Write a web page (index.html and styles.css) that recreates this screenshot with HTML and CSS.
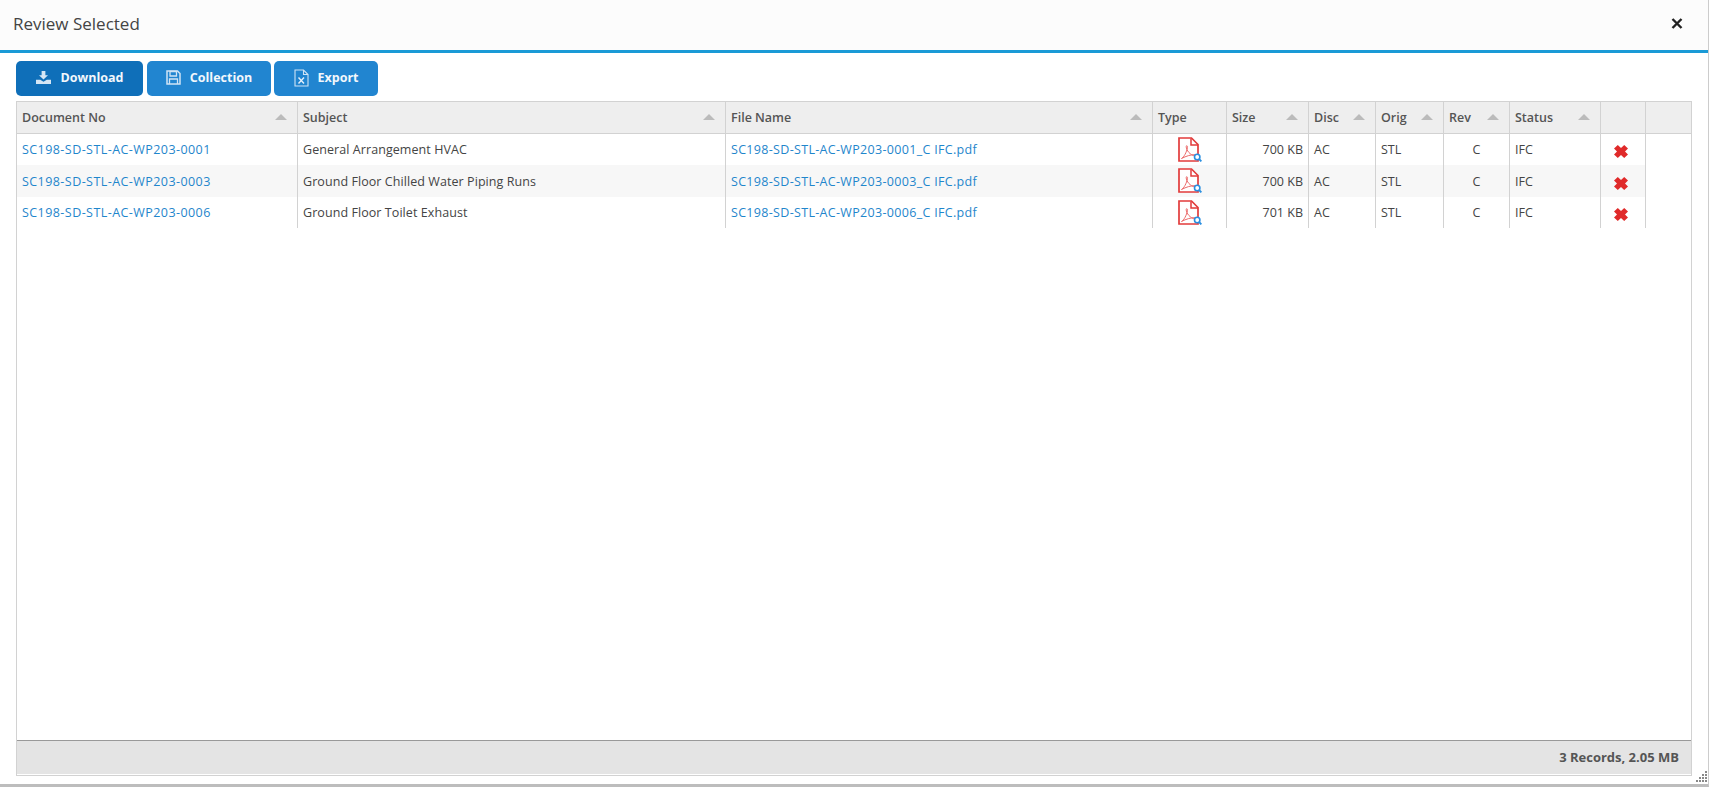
FILE: index.html
```html
<!DOCTYPE html>
<html lang="en">
<head>
  <meta charset="UTF-8">
  <meta name="viewport" content="width=device-width, initial-scale=1.0">
  <title>Review Selected</title>

  <link rel="stylesheet" href="styles.css">
</head>

<body>
  <svg class="sprites" aria-hidden="true">
    <symbol id="icon-pdf" viewBox="0 0 24 26">
      <path d="M1 1h12.500l6.500 6.500V24H1z" fill="#fff" stroke="#e23b3b" stroke-width="1.700"/>
      <path d="M13 1.500V8h7" fill="none" stroke="#e23b3b" stroke-width="1.500"/>
      <path d="M3.500 21.500c2.500-1.500 5-6 6-11 .3-2-1.300-2.500-1.300-.8 0 3.500 4 8.500 8.800 9.300 2 .3 2-1.300 .2-1.300-4-.2-9 1.300-13.700 3.800z" fill="none" stroke="#ec6a6a" stroke-width="1"/>
      <circle cx="19.200" cy="20" r="2.700" fill="#fff" stroke="#2a8fe0" stroke-width="1.600"/>
      <path d="M21 22l2.400 2.400" stroke="#2a8fe0" stroke-width="1.900"/>
    </symbol>
    <symbol id="icon-remove" viewBox="0 0 14 13">
      <path d="M3.800 0L7 3 10.200 0 14 3.600 11 6.500 14 9.400 10.200 13 7 10 3.800 13 0 9.400 3 6.500 0 3.600z" fill="#e02a2a"/>
    </symbol>
  </svg>

  <div class="dialog">
    <div class="dialog-head">
      <span class="dialog-title">Review Selected</span>
      <svg class="dialog-close" viewBox="0 0 12 11"><path d="M1.500 1l9 9M10.500 1l-9 9" stroke="#222" stroke-width="2.400"/></svg>
    </div>

    <div class="toolbar">
      <button class="btn btn-active">
        <svg class="btn-icon" viewBox="0 0 16 14"><path d="M6 0h4v4.500h2.800L8 9 3.200 4.500H6z M0 9.500h4.500L8 11.500l3.500-2H16V14H0z" fill="#d5e6f5"/></svg>
        Download
      </button>
      <button class="btn">
        <svg class="btn-icon" viewBox="0 0 15 15"><path d="M1 1h10.500L14 3.500V14H1z" fill="none" stroke="#cfe3f5" stroke-width="1.500"/><path d="M4 1.500h6.500V6H4zM3.500 14V9h8v5" fill="none" stroke="#cfe3f5" stroke-width="1.300"/></svg>
        Collection
      </button>
      <button class="btn">
        <svg class="btn-icon btn-icon-file" viewBox="0 0 15 18"><path d="M1 1h8.500L14 5.500V17H1z M9.500 1v4.500H14" fill="none" stroke="#cfe3f5" stroke-width="1.100"/><path d="M4.500 8.500l5.500 6M10 8.500l-5.500 6" stroke="#e6f0fa" stroke-width="1.400"/></svg>
        Export
      </button>
    </div>

    <div class="grid-box">
      <table class="grid">
        <colgroup>
          <col class="c-doc"><col class="c-subject"><col class="c-file"><col class="c-type"><col class="c-size">
          <col class="c-disc"><col class="c-orig"><col class="c-rev"><col class="c-status"><col class="c-del"><col>
        </colgroup>
        <thead>
          <tr>
            <th class="sort">Document No</th>
            <th class="sort">Subject</th>
            <th class="sort">File Name</th>
            <th>Type</th>
            <th class="sort">Size</th>
            <th class="sort">Disc</th>
            <th class="sort">Orig</th>
            <th class="sort">Rev</th>
            <th class="sort">Status</th>
            <th></th>
            <th></th>
          </tr>
        </thead>
        <tbody>
          <tr>
            <td class="doc-no"><a href="#">SC198-SD-STL-AC-WP203-0001</a></td>
            <td class="subject">General Arrangement HVAC</td>
            <td><a href="#">SC198-SD-STL-AC-WP203-0001_C IFC.pdf</a></td>
            <td class="mid"><svg class="pdf"><use href="#icon-pdf"/></svg></td>
            <td class="right">700 KB</td>
            <td>AC</td>
            <td>STL</td>
            <td class="mid">C</td>
            <td>IFC</td>
            <td class="del"><svg class="remove"><use href="#icon-remove"/></svg></td>
            <td class="blank"></td>
          </tr>
          <tr>
            <td class="doc-no"><a href="#">SC198-SD-STL-AC-WP203-0003</a></td>
            <td class="subject">Ground Floor Chilled Water Piping Runs</td>
            <td><a href="#">SC198-SD-STL-AC-WP203-0003_C IFC.pdf</a></td>
            <td class="mid"><svg class="pdf"><use href="#icon-pdf"/></svg></td>
            <td class="right">700 KB</td>
            <td>AC</td>
            <td>STL</td>
            <td class="mid">C</td>
            <td>IFC</td>
            <td class="del"><svg class="remove"><use href="#icon-remove"/></svg></td>
            <td class="blank"></td>
          </tr>
          <tr>
            <td class="doc-no"><a href="#">SC198-SD-STL-AC-WP203-0006</a></td>
            <td class="subject">Ground Floor Toilet Exhaust</td>
            <td><a href="#">SC198-SD-STL-AC-WP203-0006_C IFC.pdf</a></td>
            <td class="mid"><svg class="pdf"><use href="#icon-pdf"/></svg></td>
            <td class="right">701 KB</td>
            <td>AC</td>
            <td>STL</td>
            <td class="mid">C</td>
            <td>IFC</td>
            <td class="del"><svg class="remove"><use href="#icon-remove"/></svg></td>
            <td class="blank"></td>
          </tr>
        </tbody>
      </table>
      <div class="grid-foot">3 Records, 2.05 MB</div>
    </div>

    <svg class="resizer" viewBox="0 0 11 11"><path d="M9 0h2v2H9zM6 3h2v2H6zM9 3h2v2H9zM3 6h2v2H3zM6 6h2v2H6zM9 6h2v2H9zM0 9h2v2H0zM3 9h2v2H3zM6 9h2v2H6zM9 9h2v2H9z" fill="#888"/></svg>
  </div>
</body>
</html>
```

FILE: styles.css
```css
* {
  box-sizing: border-box;
}

html, body {
  height: 100%;
}

body {
  margin: 0;
  background: #fff;
  font-family: "Open Sans", "Noto Sans", sans-serif;
  font-size: 12px;
  color: #444;
  overflow: hidden;
}

.sprites {
  display: none;
}

.dialog {
  position: relative;
  display: flex;
  flex-direction: column;
  height: 100%;
  border-right: 1px solid #ccc;
  border-bottom: 3px solid #bdbdbd;
}

.dialog-head {
  display: flex;
  justify-content: space-between;
  align-items: center;
  height: 53px;
  flex: none;
  padding: 0 25px 3px 13px;
  background: #fcfcfc;
  border-bottom: 3px solid #1a9ad6;
}

.dialog-title {
  font-size: 17px;
  color: #444;
}

.dialog-close {
  width: 12px;
  height: 11px;
}

.toolbar {
  display: flex;
  flex: none;
  gap: 3px;
  padding: 8px 0 5px 16px;
}

.btn {
  display: flex;
  align-items: center;
  justify-content: center;
  gap: 9px;
  width: 124px;
  height: 35px;
  padding: 0 0 2px;
  background: #2185d0;
  border: 0;
  border-radius: 5px;
  font-family: inherit;
  font-size: 12.5px;
  font-weight: 700;
  color: #f2f7fc;
}

.btn:nth-child(1) {
  width: 127px;
  margin-right: 1px;
}

.btn:nth-child(3) {
  width: 104px;
}

.btn-active {
  gap: 10px;
  background: #0f6fb9;
}

.btn-icon {
  width: 15px;
  height: 15px;
}

.btn-icon-file {
  height: 18px;
}

.grid-box {
  display: flex;
  flex-direction: column;
  flex: 1;
  min-height: 0;
  margin: 0 16px 8px 16px;
  border: 1px solid #d2d2d2;
}

.grid {
  flex: none;
  width: 100%;
  table-layout: fixed;
  border-collapse: separate;
  border-spacing: 0;
}

.c-doc { width: 281px; }
.c-subject { width: 428px; }
.c-file { width: 427px; }
.c-type { width: 74px; }
.c-size { width: 82px; }
.c-disc { width: 67px; }
.c-orig { width: 68px; }
.c-rev { width: 66px; }
.c-status { width: 91px; }
.c-del { width: 45px; }

.grid th {
  position: relative;
  height: 32px;
  padding: 0 5px;
  background: #eee;
  border-right: 1px solid #d2d2d2;
  border-bottom: 1px solid #d2d2d2;
  font-size: 12.5px;
  font-weight: 600;
  text-align: left;
  color: #555;
}

.grid th:last-child,
.grid td:last-child {
  border-right: 0;
}

.grid th.sort::after {
  content: "";
  position: absolute;
  top: 12px;
  right: 10px;
  border-left: 6px solid transparent;
  border-right: 6px solid transparent;
  border-bottom: 6px solid #bbb;
}

.grid td {
  height: 31px;
  padding: 0 5px;
  border-right: 1px solid #d2d2d2;
  font-size: 12.5px;
  white-space: nowrap;
  overflow: hidden;
}

.grid tbody tr:nth-child(even) td {
  height: 32px;
  background: #f7f7f7;
}

.grid tbody tr td.blank {
  background: #fff;
}

.grid a {
  color: #1f86cc;
  text-decoration: none;
  letter-spacing: .32px;
}

.grid .doc-no a {
  letter-spacing: .44px;
}

.subject {
  letter-spacing: .07px;
}

.mid {
  text-align: center;
}

.right {
  text-align: right;
}

.pdf {
  display: block;
  width: 24px;
  height: 26px;
  margin: 0 auto;
}

.remove {
  display: block;
  width: 14px;
  height: 13px;
  margin: 4px 0 0 8px;
}

.grid-foot {
  margin-top: auto;
  height: 35px;
  padding: 0 12px 0 0;
  background: #e4e4e4;
  border-top: 1px solid #999;
  border-bottom: 1px solid #fff;
  font-size: 13px;
  font-weight: 700;
  line-height: 33px;
  text-align: right;
  color: #555;
}

.resizer {
  position: absolute;
  right: 1px;
  bottom: 2px;
  width: 11px;
  height: 11px;
}
```
